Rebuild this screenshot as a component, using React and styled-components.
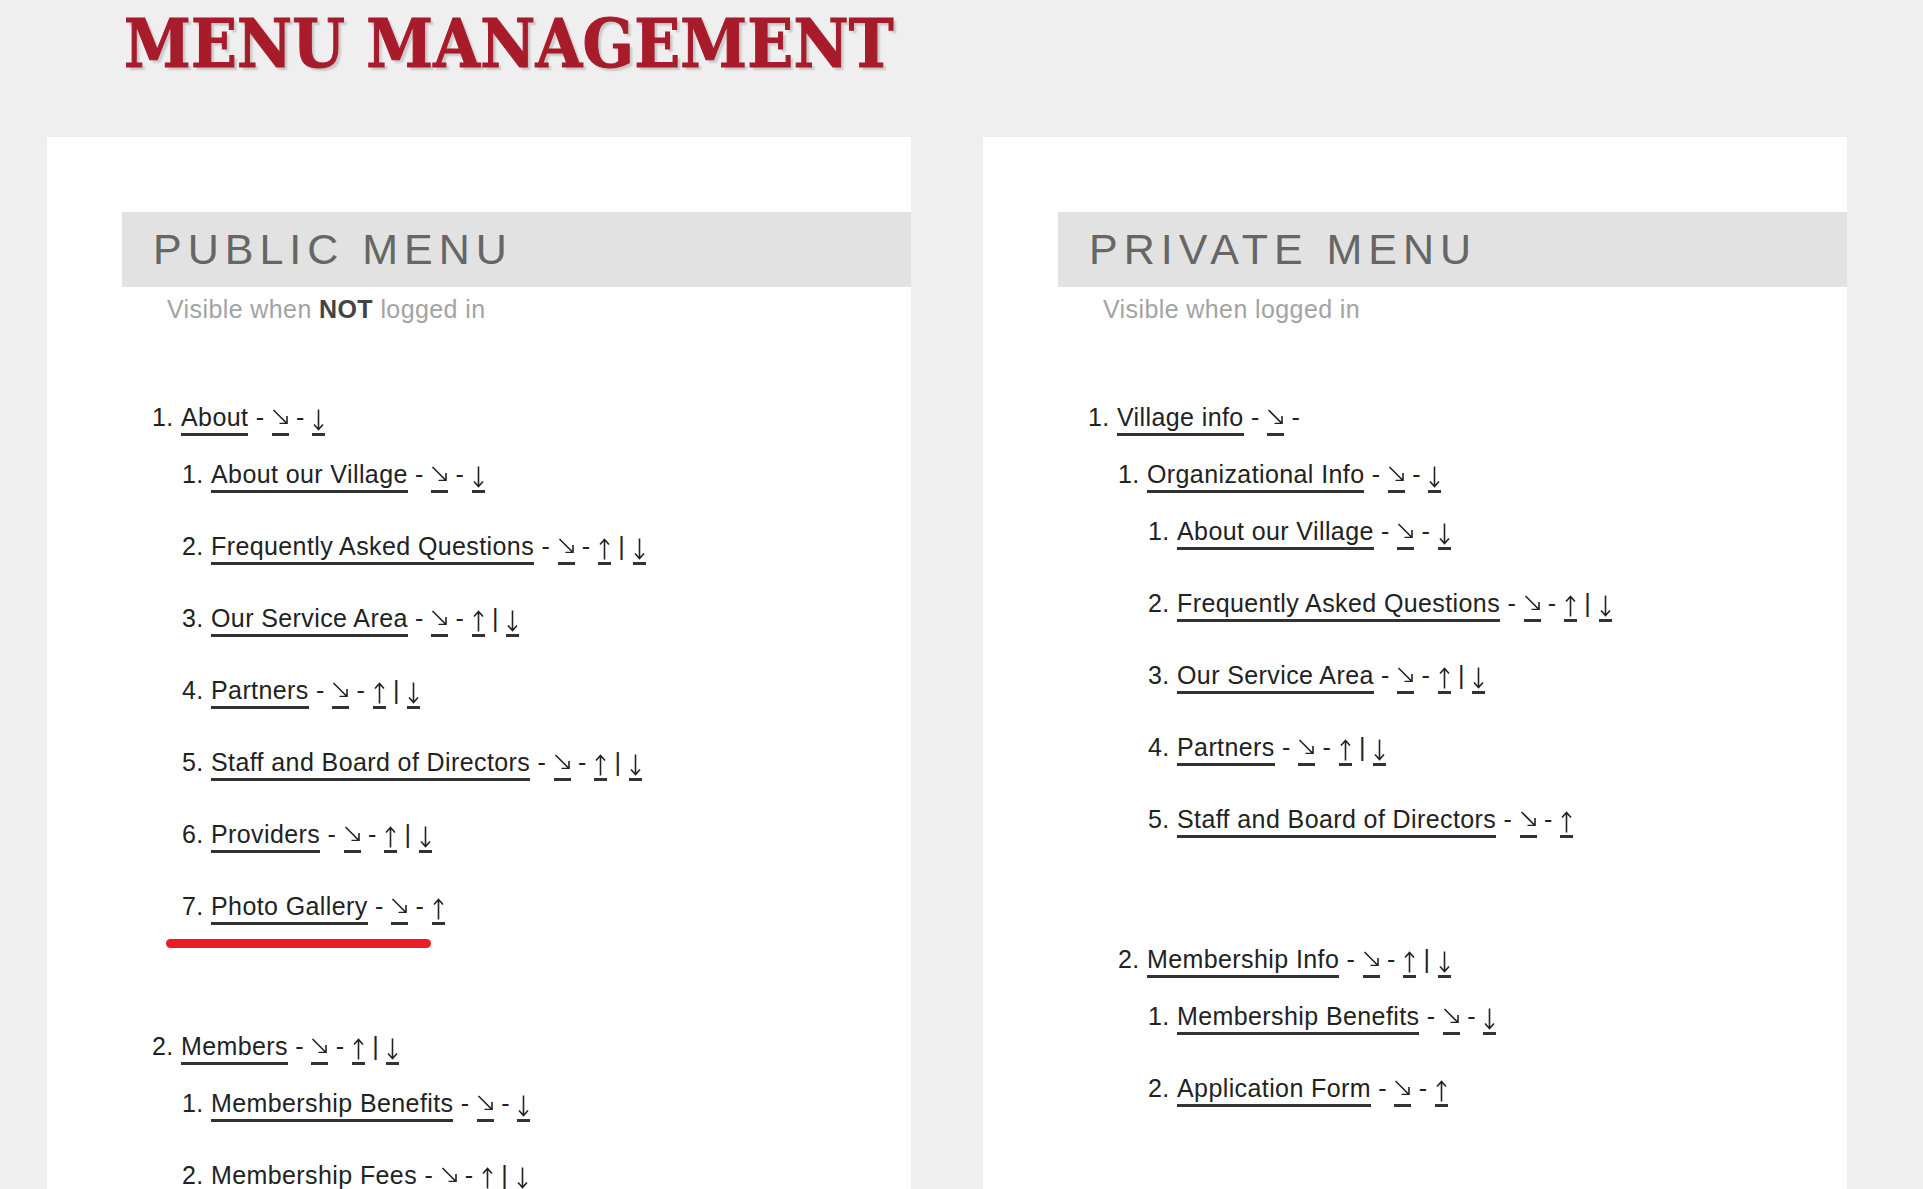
import React from "react";
import styled, { createGlobalStyle } from "styled-components";

// 페이지 전역 스타일
const GlobalStyles = createGlobalStyle`
  html, body {
    margin: 0;
    padding: 0;
    background: #efefef;
    font-family: "Liberation Sans", Arial, sans-serif;
    color: #222;
  }
`;

const Page = styled.div`
  padding: 0 76px 0 47px;
`;

const Title = styled.h1`
  margin: 0 0 54px 77px;
  padding-top: 5px;
  font-family: "DejaVu Serif Condensed", "DejaVu Serif", "Liberation Serif", serif;
  font-stretch: condensed;
  font-size: 67px;
  line-height: 78px;
  font-weight: 700;
  letter-spacing: 0.2px;
  color: #a81b2a;
  -webkit-text-stroke: 1px #a81b2a;
  text-shadow: 3px 3px 2px rgba(0, 0, 0, 0.16);
`;

const Columns = styled.div`
  display: grid;
  grid-template-columns: 1fr 1fr;
  gap: 72px;
`;

const Card = styled.section`
  background: #fff;
  padding: 75px 0 80px 75px;
  min-height: 1100px;
`;

const Bar = styled.h2`
  margin: 0;
  height: 75px;
  padding-left: 31px;
  background: #e2e2e2;
  font-size: 43px;
  line-height: 75px;
  font-weight: 400;
  letter-spacing: 6px;
  color: #666;
`;

const Subtitle = styled.p`
  margin: 7px 0 0;
  padding-left: 45px;
  font-size: 25px;
  letter-spacing: 0.4px;
  line-height: 30px;
  color: #a3a3a3;

  strong {
    color: #444;
  }
`;

// 메뉴 목록 (중첩 가능)
const List = styled.ol`
  margin: ${(p) => (p.$nested ? "0" : "65px 0 0")};
  padding: ${(p) => (p.$nested ? "0 0 53px 30px" : "0 0 0 30px")};
  list-style: decimal inside;
  font-size: 25px;
  letter-spacing: 0.4px;
  line-height: 57px;
  color: #222;
`;

const Item = styled.li`
  position: relative;
  padding-bottom: 15px;

  /* 빨간 펜으로 그은 표시 */
  &::after {
    content: ${(p) => (p.$marked ? "''" : "none")};
    position: absolute;
    left: -16px;
    top: 61px;
    width: 265px;
    height: 9px;
    border-radius: 5px;
    background: #ed1c24;
  }
`;

const Link = styled.a`
  color: #222;
  text-decoration: none;
  border-bottom: 3px solid #333;
  padding-bottom: 2px;
  cursor: pointer;
`;

const Svg = styled.svg`
  display: inline;
  vertical-align: ${(p) => (p.$diag ? "2px" : "-5px")};
  fill: none;
  stroke: #222;
  stroke-width: 1.6;
`;

const arrows = {
  indent: { w: 17, h: 15, d: "M1.5 1 L15 14.5 M15 7 V14.5 H7.5" },
  up: { w: 13, h: 22, d: "M6.5 21.5 V1.5 M2 6.5 L6.5 1.5 L11 6.5" },
  down: { w: 13, h: 22, d: "M6.5 0.5 V20.5 M2 15.5 L6.5 20.5 L11 15.5" },
};

const Arrow = ({ dir }) => {
  const a = arrows[dir];
  return (
    <Link aria-label={dir}>
      <Svg $diag={dir === "indent"} width={a.w} height={a.h} viewBox={`0 0 ${a.w} ${a.h}`}>
        <path d={a.d} />
      </Svg>
    </Link>
  );
};

const publicMenu = [
  {
    label: "About",
    children: [
      { label: "About our Village" },
      { label: "Frequently Asked Questions" },
      { label: "Our Service Area" },
      { label: "Partners" },
      { label: "Staff and Board of Directors" },
      { label: "Providers" },
      { label: "Photo Gallery", marked: true },
    ],
  },
  {
    label: "Members",
    children: [
      { label: "Membership Benefits" },
      { label: "Membership Fees" },
      { label: "Application Form" },
    ],
  },
  { label: "Contact" },
];

const privateMenu = [
  {
    label: "Village info",
    children: [
      {
        label: "Organizational Info",
        children: [
          { label: "About our Village" },
          { label: "Frequently Asked Questions" },
          { label: "Our Service Area" },
          { label: "Partners" },
          { label: "Staff and Board of Directors" },
        ],
      },
      {
        label: "Membership Info",
        children: [
          { label: "Membership Benefits" },
          { label: "Application Form" },
        ],
      },
      { label: "Member Resources" },
    ],
  },
];

const MenuList = ({ items, nested }) => (
  <List $nested={nested}>
    {items.map((item, i) => {
      const up = i > 0;
      const down = i < items.length - 1;
      return (
        <Item key={item.label} $marked={item.marked}>
          <Link>{item.label}</Link>
          {" - "}
          <Arrow dir="indent" />
          {" - "}
          {up && <Arrow dir="up" />}
          {up && down && " | "}
          {down && <Arrow dir="down" />}
          {item.children && <MenuList items={item.children} nested />}
        </Item>
      );
    })}
  </List>
);

const App = () => {
  return (
    <>
      <GlobalStyles />
      <Page>
        <Title>MENU MANAGEMENT</Title>
        <Columns>
          <Card>
            <Bar>PUBLIC MENU</Bar>
            <Subtitle>
              Visible when <strong>NOT</strong> logged in
            </Subtitle>
            <MenuList items={publicMenu} />
          </Card>
          <Card>
            <Bar>PRIVATE MENU</Bar>
            <Subtitle>Visible when logged in</Subtitle>
            <MenuList items={privateMenu} />
          </Card>
        </Columns>
      </Page>
    </>
  );
};

export default App;
